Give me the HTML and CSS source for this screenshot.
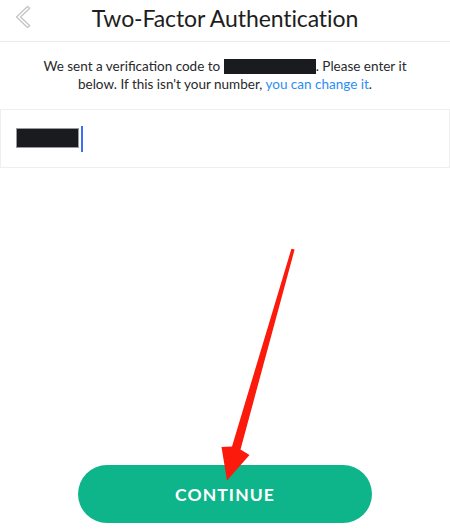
FILE: index.html
```html
<!DOCTYPE html>
<html lang="en">
<head>
<meta charset="utf-8">
<title>Two-Factor Authentication</title>
<link rel="stylesheet" href="styles.css">
</head>
<body>
<div class="screen">
  <header class="topbar">
    <button class="back" aria-label="Back">
      <svg width="18" height="24" viewBox="0 0 18 24">
        <path d="M13.5 1.5 L15.8 3.2 L6.5 12 L15.8 20.8 L13.5 22.5 L2.5 12 Z" fill="none" stroke="#c4c4c4" stroke-width="1.3" stroke-linejoin="round"/>
      </svg>
    </button>
    <h1 class="title">Two-Factor Authentication</h1>
  </header>

  <p class="message">
    We sent a verification code to <span class="redact redact-phone"></span>. Please enter it<br>
    below. If this isn't your number, <a class="link" href="#">you can change it</a>.
  </p>

  <div class="code-field">
    <span class="redact redact-code"></span><span class="caret"></span>
  </div>

  <div class="spacer"></div>

  <div class="actions">
    <button class="continue">CONTINUE</button>
  </div>

  <svg class="pointer" width="450" height="532" viewBox="0 0 450 532">
    <polygon points="291.4,248.8 294.6,249.6 240.5,449.5 249.5,455 227,480.5 221.5,447 232,446.5" fill="#fb1a0c"/>
  </svg>
</div>
</body>
</html>
```

FILE: styles.css
```css
* { box-sizing: border-box; }

html, body {
  margin: 0;
  padding: 0;
  background: #ffffff;
}

body {
  font-family: Lato, "Open Sans", Arial, sans-serif;
  color: #222326;
}

.screen {
  position: relative;
  width: 450px;
  height: 532px;
  display: flex;
  flex-direction: column;
  overflow: hidden;
}

.topbar {
  height: 42px;
  border-bottom: 1px solid #ececec;
  display: flex;
  align-items: center;
  justify-content: center;
  position: relative;
}

.back {
  position: absolute;
  left: 14px;
  top: 5px;
  padding: 0;
  border: 0;
  background: none;
  line-height: 0;
}

.title {
  margin: 0;
  margin-top: -5px;
  font-size: 23px;
  font-weight: 400;
  letter-spacing: -0.1px;
  color: #1d1e21;
}

.message {
  margin: 0;
  padding: 15px 0 16px;
  text-align: center;
  font-size: 13.5px;
  line-height: 18px;
  color: #28292c;
}

.redact {
  display: inline-block;
  background: #1a1b1f;
  vertical-align: middle;
}

.redact-phone {
  width: 92px;
  height: 15px;
  margin: -3px 0 0;
}

.link {
  color: #2b8ef3;
  text-decoration: none;
}

.code-field {
  height: 59px;
  border: 1px solid #efefef;
  display: flex;
  align-items: center;
  padding-left: 15px;
}

.redact-code {
  width: 63px;
  height: 20px;
  border: 1px solid #9a9a9a;
  margin-top: -2px;
}

.caret {
  width: 2px;
  height: 26px;
  margin-left: 2px;
  background: #3d6ff6;
}

.spacer {
  flex: 1;
}

.actions {
  display: flex;
  justify-content: center;
  padding-bottom: 9px;
}

.continue {
  width: 294px;
  height: 58px;
  border: 0;
  border-radius: 29px;
  background: #0fb58a;
  color: #ffffff;
  font-family: Lato, "Open Sans", Arial, sans-serif;
  font-size: 17.5px;
  font-weight: 700;
  letter-spacing: 1.1px;
  padding: 0;
}

.pointer {
  position: absolute;
  left: 0;
  top: 0;
  pointer-events: none;
}
```
